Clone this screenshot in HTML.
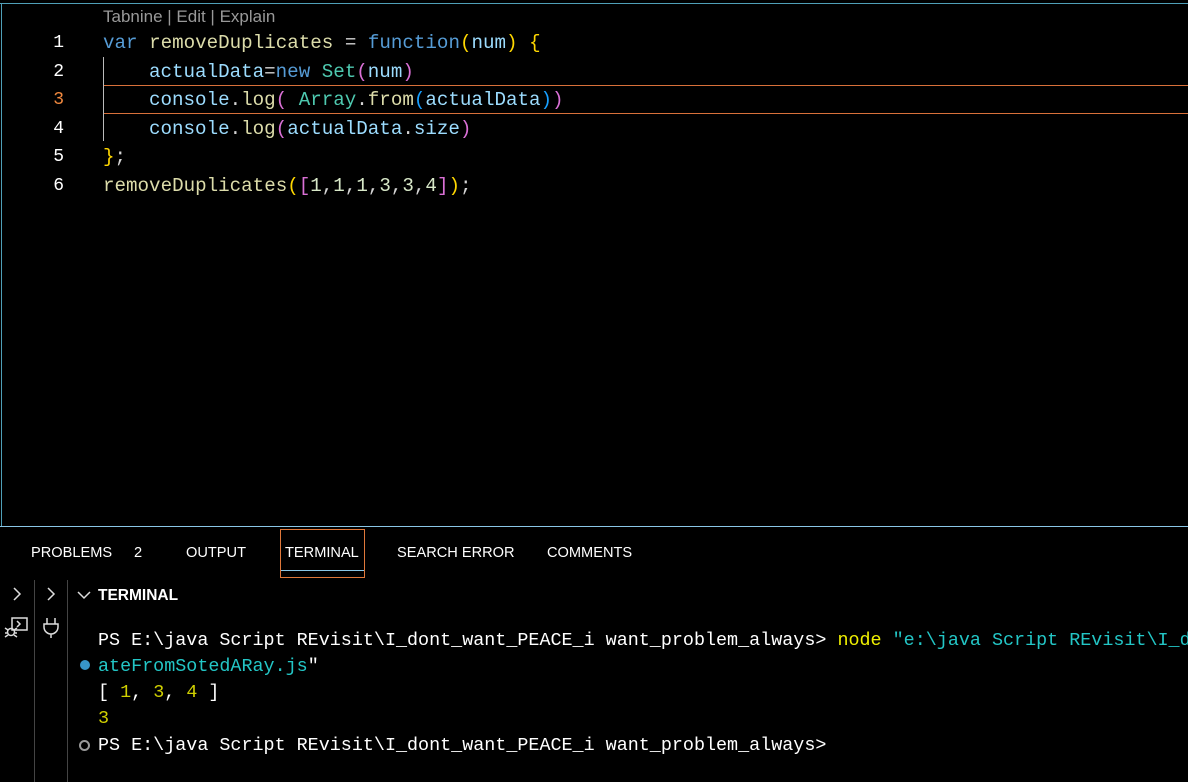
<!DOCTYPE html>
<html><head><style>
body{margin:0;width:1188px;height:782px;background:#000;overflow:hidden;position:relative;font-family:"Liberation Mono",monospace;}
.a{position:absolute;white-space:pre;}
.c{font-size:19.2px;line-height:28px;height:28px;color:#9cdcfe;}
.n{font-size:18px;line-height:28px;color:#fff;width:30px;text-align:right;left:34px;}
.t{font-size:18.4px;line-height:26px;color:#fff;}
.tab{font-family:"Liberation Sans",sans-serif;font-size:14.6px;color:#fff;top:545px;}
.k{color:#569cd6}.f{color:#dcdcaa}.y{color:#ffd700}.p{color:#da70d6}.g{color:#4ec9b0}.w{color:#d4d4d4}.b{color:#179fff}.o{color:#d8e8c8}
</style></head><body>
<div class="a" style="left:0;top:3px;width:1188px;height:1px;background:#4f9fb8"></div>
<div class="a" style="left:1px;top:3px;width:1px;height:523px;background:#4f9fb8"></div>
<div class="a" style="left:0;top:526px;width:1188px;height:1px;background:#8ac6e6"></div>
<div class="a" style="left:103px;top:7px;font-family:'Liberation Sans',sans-serif;font-size:17px;color:#999">Tabnine | Edit | Explain</div>
<div class="a" style="left:103px;top:85px;width:1085px;height:1px;background:#d8703a"></div>
<div class="a" style="left:103px;top:113px;width:1085px;height:1px;background:#d8703a"></div>
<div class="a" style="left:103px;top:57px;width:1px;height:84px;background:#bbb"></div>
<div class="a n" style="top:29px">1</div>
<div class="a n" style="top:58px">2</div>
<div class="a n" style="top:86px;color:#f0883e">3</div>
<div class="a n" style="top:115px">4</div>
<div class="a n" style="top:143px">5</div>
<div class="a n" style="top:172px">6</div>
<div class="a c" style="left:103px;top:29px"><span class="k">var</span> <span class="f">removeDuplicates</span> <span class="w">=</span> <span class="k">function</span><span class="y">(</span>num<span class="y">)</span> <span class="y">{</span></div>
<div class="a c" style="left:149px;top:58px">actualData<span class="w">=</span><span class="k">new</span> <span class="g">Set</span><span class="p">(</span>num<span class="p">)</span></div>
<div class="a c" style="left:149px;top:86px">console<span class="w">.</span><span class="f">log</span><span class="p">(</span> <span class="g">Array</span><span class="w">.</span><span class="f">from</span><span class="b">(</span>actualData<span class="b">)</span><span class="p">)</span></div>
<div class="a c" style="left:149px;top:115px">console<span class="w">.</span><span class="f">log</span><span class="p">(</span>actualData<span class="w">.</span>size<span class="p">)</span></div>
<div class="a c" style="left:103px;top:143px"><span class="y">}</span><span class="w">;</span></div>
<div class="a c" style="left:103px;top:172px"><span class="f">removeDuplicates</span><span class="y">(</span><span class="p">[</span><span class="o">1</span><span class="w">,</span><span class="o">1</span><span class="w">,</span><span class="o">1</span><span class="w">,</span><span class="o">3</span><span class="w">,</span><span class="o">3</span><span class="w">,</span><span class="o">4</span><span class="p">]</span><span class="y">)</span><span class="w">;</span></div>

<div class="a tab" style="left:31px">PROBLEMS</div>
<div class="a tab" style="left:134px">2</div>
<div class="a tab" style="left:186px">OUTPUT</div>
<div class="a tab" style="left:285px">TERMINAL</div>
<div class="a tab" style="left:397px">SEARCH ERROR</div>
<div class="a tab" style="left:547px">COMMENTS</div>
<div class="a" style="left:280px;top:529px;width:83px;height:47px;border:1px solid #e0783a"></div>
<div class="a" style="left:281px;top:570px;width:83px;height:1px;background:#8ac6e6"></div>

<div class="a" style="left:34px;top:580px;width:1px;height:202px;background:#444"></div>
<div class="a" style="left:67px;top:580px;width:1px;height:202px;background:#444"></div>
<svg class="a" style="left:0;top:580px" width="100" height="70" viewBox="0 0 100 70" fill="none" stroke="#ddd" stroke-width="1.5">
<path d="M14 8l6 6-6 6"/><path d="M48 8l6 6-6 6"/><path d="M78 12l6 6 6-6"/>
<rect x="12" y="38" width="15" height="12"/><path d="M17 41l3 3-3 3"/>
<circle cx="11" cy="52" r="3.5"/><path d="M5 48l3 2M5 53h2M5 57l3-2M17 48l-3 2M17 53h-2M17 57l-3-2"/>
<path d="M47 38v6M55 38v6M44 44h14v3a7 7 0 0 1-14 0zM51 54v4"/>
</svg>
<div class="a" style="left:98px;top:587px;font-family:'Liberation Sans',sans-serif;font-weight:bold;font-size:15.5px;color:#fff">TERMINAL</div>
<div class="a t" style="left:98px;top:628px">PS E:\java Script REvisit\I_dont_want_PEACE_i want_problem_always> <span style="color:#f0f000">node</span> <span style="color:#23c6c6">"e:\java Script REvisit\I_d</span></div>
<div class="a" style="left:80px;top:660px;width:10px;height:10px;border-radius:50%;background:#3794c8"></div>
<div class="a t" style="left:98px;top:654px;color:#23c6c6">ateFromSotedARay.js<span style="color:#fff">"</span></div>
<div class="a t" style="left:98px;top:680px">[ <span style="color:#d0d000">1</span>, <span style="color:#d0d000">3</span>, <span style="color:#d0d000">4</span> ]</div>
<div class="a t" style="left:98px;top:706px;color:#d0d000">3</div>
<div class="a" style="left:79px;top:740px;width:7px;height:7px;border-radius:50%;border:2px solid #999"></div>
<div class="a t" style="left:98px;top:733px">PS E:\java Script REvisit\I_dont_want_PEACE_i want_problem_always></div>
</body></html>
